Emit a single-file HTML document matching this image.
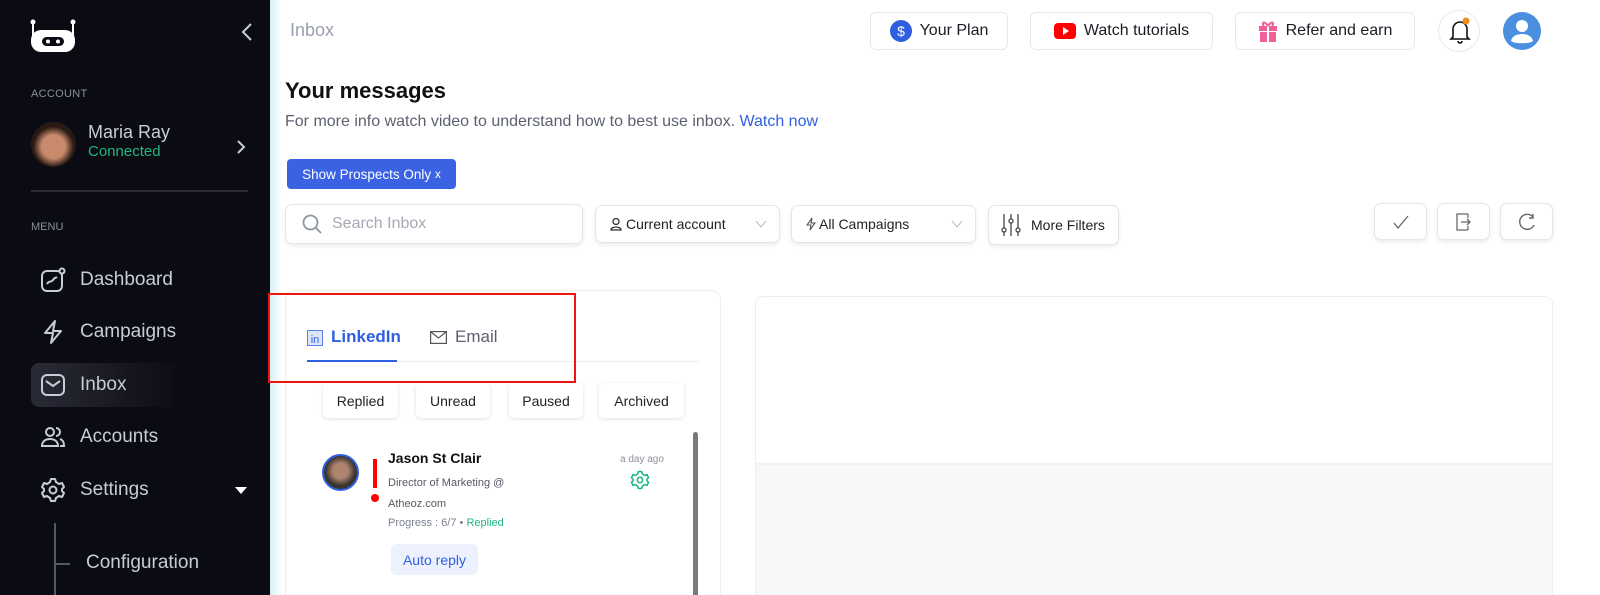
<!DOCTYPE html>
<html style="overflow:hidden;width:1600px;height:595px"><head><meta charset="utf-8"><style>
*{box-sizing:border-box;margin:0;padding:0}
body{width:1600px;height:595px;overflow:hidden;background:#fff;font-family:"Liberation Sans",sans-serif;position:relative}
.a{position:absolute}
.sb{left:0;top:0;width:270px;height:595px;background:#0b0b14}
.strip{left:270px;top:0;width:12px;height:595px;background:linear-gradient(90deg,#d6eef8,#fff)}
.mi{position:absolute;left:40px;color:#c9ccd4;font-size:19px;display:flex;align-items:center;gap:14px}
.btn{position:absolute;border:1px solid #e6e8ec;border-radius:6px;background:#fff;display:flex;align-items:center;justify-content:center;gap:8px;font-size:16px;color:#1c1c24}
.f{position:absolute;border:1px solid #e3e5ea;border-radius:7px;background:#fff;box-shadow:0 2px 4px rgba(0,0,0,.08);display:flex;align-items:center;font-size:14px;color:#222}
.chip{position:absolute;top:383px;height:35px;border-radius:5px;background:#fff;box-shadow:0 1px 4px rgba(0,0,0,.12);font-size:14px;color:#222;display:flex;align-items:center;justify-content:center}
</style></head><body>
<div class="a sb"></div>
<div class="a strip"></div>
<svg class="a" style="left:28px;top:18px" width="50" height="34" viewBox="0 0 50 34"><circle cx="5" cy="4" r="2.5" fill="#fff"/><circle cx="45" cy="4" r="2.5" fill="#fff"/><rect x="4" y="4" width="2" height="14" fill="#fff"/><rect x="44" y="4" width="2" height="14" fill="#fff"/><rect x="3" y="12" width="44" height="22" rx="10" fill="#fff"/><rect x="14" y="19" width="22" height="9" rx="4.5" fill="#0b0b14"/><circle cx="20" cy="23.5" r="2" fill="#fff"/><circle cx="30" cy="23.5" r="2" fill="#fff"/></svg>
<svg class="a" style="left:240px;top:22px" width="14" height="20"><path d="M11 2L3 10l8 8" stroke="#c9ccd4" stroke-width="2" fill="none"/></svg>
<div class="a" style="left:31px;top:88px;font-size:11px;color:#8b8f9b;letter-spacing:.3px">ACCOUNT</div>
<div class="a" style="left:31px;top:122px;width:45px;height:45px;border-radius:50%;background:radial-gradient(circle at 50% 55%,#c98a6c 0 35%,#2a1a14 60%)"></div>
<div class="a" style="left:88px;top:122px;font-size:18px;color:#c9ccd4">Maria Ray</div>
<div class="a" style="left:88px;top:143px;font-size:15px;color:#1fb77f">Connected</div>
<svg class="a" style="left:236px;top:140px" width="10" height="14"><path d="M2 1l6 6-6 6" stroke="#c9ccd4" stroke-width="2" fill="none"/></svg>
<div class="a" style="left:31px;top:190px;width:217px;height:2px;background:#2a2b36"></div>
<div class="a" style="left:31px;top:221px;font-size:11px;color:#8b8f9b">MENU</div>
<div class="a" style="left:31px;top:363px;width:150px;height:44px;border-radius:8px;background:linear-gradient(90deg,#2a2b36,#0b0b14)"></div>
<div class="mi" style="top:267px"><svg width="26" height="26" viewBox="0 0 26 26" fill="none" stroke="#c9ccd4" stroke-width="2"><rect x="2" y="4" width="20" height="20" rx="5"/><circle cx="22" cy="4" r="2.5" fill="#0b0b14"/><path d="M7 17c2-4 4-1 6-4s3-2 4-3"/></svg>Dashboard</div>
<div class="mi" style="top:319px"><svg width="26" height="26" viewBox="0 0 26 26" fill="none" stroke="#c9ccd4" stroke-width="2"><path d="M15 2L5 14h8l-2 10 10-12h-8z" stroke-linejoin="round"/></svg>Campaigns</div>
<div class="mi" style="top:372px"><svg width="26" height="26" viewBox="0 0 26 26" fill="none" stroke="#c9ccd4" stroke-width="2"><rect x="2" y="3" width="22" height="20" rx="5"/><path d="M6 9l7 5 7-5"/></svg>Inbox</div>
<div class="mi" style="top:424px"><svg width="26" height="26" viewBox="0 0 26 26" fill="none" stroke="#c9ccd4" stroke-width="2"><circle cx="10" cy="8" r="4"/><path d="M2 22c0-5 4-7 8-7s8 2 8 7z"/><path d="M16 4a4 4 0 010 8M20 15c3 1 4 3 4 7h-4"/></svg>Accounts</div>
<div class="mi" style="top:477px"><svg width="26" height="26" viewBox="0 0 26 26" fill="none" stroke="#c9ccd4" stroke-width="2"><circle cx="13" cy="13" r="3.5"/><path d="M11 2h4l1 3 3 2 3-1 2 4-2 2v2l2 2-2 4-3-1-3 2-1 3h-4l-1-3-3-2-3 1-2-4 2-2v-2l-2-2 2-4 3 1 3-2z" stroke-linejoin="round"/></svg>Settings</div>
<svg class="a" style="left:234px;top:486px" width="14" height="9"><path d="M1 1h12l-6 7z" fill="#fff"/></svg>
<div class="a" style="left:54px;top:523px;width:2px;height:72px;background:#555866"></div>
<div class="a" style="left:54px;top:563px;width:16px;height:2px;background:#555866"></div>
<div class="a" style="left:86px;top:552px;font-size:19px;color:#c9ccd4">Configuration</div>

<div class="a" style="left:290px;top:20px;font-size:18px;color:#9aa0ad">Inbox</div>
<div class="btn" style="left:870px;top:12px;width:138px;height:38px"><svg width="22" height="22"><circle cx="11" cy="11" r="11" fill="#2f5fe0"/><text x="11" y="16" font-size="14" fill="#fff" text-anchor="middle" font-family="Liberation Sans">$</text></svg>Your Plan</div>
<div class="btn" style="left:1030px;top:12px;width:183px;height:38px"><svg width="22" height="16"><rect width="22" height="16" rx="4" fill="#f00"/><path d="M9 4l6 4-6 4z" fill="#fff"/></svg>Watch tutorials</div>
<div class="btn" style="left:1235px;top:12px;width:180px;height:38px"><svg width="20" height="22"><rect x="1" y="6" width="18" height="5" fill="#f0609a"/><rect x="2" y="12" width="16" height="10" fill="#f0609a"/><rect x="9" y="6" width="2" height="16" fill="#fff"/><path d="M10 6C6 0 3 3 6 6M10 6c4-6 7-3 4 0" stroke="#f0609a" stroke-width="2" fill="none"/></svg>Refer and earn</div>
<div class="a" style="left:1438px;top:10px;width:42px;height:42px;border-radius:50%;border:1px solid #e6e8ec;background:#fff"></div>
<svg class="a" style="left:1449px;top:17px" width="22" height="28" viewBox="0 0 22 28" fill="none" stroke="#111" stroke-width="1.6"><path d="M4 20V12a7 7 0 0114 0v8l2 2H2z"/><path d="M9 24a2 2 0 004 0"/><circle cx="17" cy="4" r="3.5" fill="#f28c1c" stroke="none"/></svg>
<svg class="a" style="left:1503px;top:12px" width="38" height="38"><circle cx="19" cy="19" r="19" fill="#4a8fe0"/><circle cx="19" cy="14" r="6" fill="#fff"/><path d="M8 29c1-5 6-7 11-7s10 2 11 7c-3 3-19 3-22 0z" fill="#fff"/></svg>

<div class="a" style="left:285px;top:78px;font-size:22px;font-weight:bold;color:#111">Your messages</div>
<div class="a" style="left:285px;top:113px;font-size:16px;color:#5c6170">For more info watch video to understand how to best use inbox. <span style="color:#2f5fe0">Watch now</span></div>
<div class="a" style="left:287px;top:159px;width:169px;height:30px;border-radius:4px;background:#3a62e3;color:#fff;font-size:13.5px;display:flex;align-items:center;justify-content:center">Show Prospects Only&nbsp;<span style="font-size:12px">x</span></div>

<div class="f" style="left:285px;top:204px;width:298px;height:40px;padding-left:16px;color:#a5a9b4;font-size:16px"><svg width="20" height="20" fill="none" stroke="#8c93a3" stroke-width="1.8" style="margin-right:10px"><circle cx="8.5" cy="8.5" r="7"/><path d="M14 14l5 5"/></svg>Search Inbox</div>
<div class="f" style="left:595px;top:205px;width:185px;height:38px;padding-left:14px"><svg width="12" height="14" fill="none" stroke="#333" stroke-width="1.3" style="margin-right:4px"><circle cx="6" cy="4.5" r="3"/><path d="M1 13c0-4 10-4 10 0z"/></svg>Current account<svg width="12" height="8" style="position:absolute;right:12px" fill="none" stroke="#bbb"><path d="M1 1l5 6 5-6"/></svg></div>
<div class="f" style="left:791px;top:205px;width:185px;height:38px;padding-left:14px"><svg width="10" height="14" fill="none" stroke="#555" stroke-width="1.1" style="margin-right:3px"><path d="M6 1L1 8h4l-1 5 5-7H5z"/></svg>All Campaigns<svg width="12" height="8" style="position:absolute;right:12px" fill="none" stroke="#bbb"><path d="M1 1l5 6 5-6"/></svg></div>
<div class="f" style="left:988px;top:205px;width:131px;height:40px;padding-left:12px;gap:10px"><svg width="20" height="24" fill="none" stroke="#444" stroke-width="1.3"><path d="M3 1v22M10 1v22M17 1v22"/><circle cx="3" cy="17" r="2" fill="#fff"/><circle cx="10" cy="8" r="2" fill="#fff"/><circle cx="17" cy="17" r="2" fill="#fff"/></svg>More Filters</div>
<div class="f" style="left:1374px;top:203px;width:53px;height:37px;justify-content:center"><svg width="16" height="14" fill="none" stroke="#666" stroke-width="1.3"><path d="M1 8l4 5 10-12"/></svg></div>
<div class="f" style="left:1437px;top:203px;width:53px;height:37px;justify-content:center"><svg width="16" height="18" fill="none" stroke="#666" stroke-width="1.3"><path d="M12 1H1v16h11M12 13v4M12 1v4M5 9h9M11 6l3 3-3 3"/></svg></div>
<div class="f" style="left:1500px;top:203px;width:53px;height:37px;justify-content:center"><svg width="18" height="18" fill="none" stroke="#666" stroke-width="1.4"><path d="M15 4A7.5 7.5 0 1016 12M15 1v4h-4"/></svg></div>

<div class="a" style="left:285px;top:290px;width:436px;height:305px;border:1px solid #eceef1;border-bottom:none;border-radius:10px 10px 0 0"></div>
<div class="a" style="left:307px;top:361px;width:392px;height:1px;background:#eceef1"></div>
<div class="a" style="left:307px;top:360px;width:90px;height:2px;background:#2f5fe0"></div>
<svg class="a" style="left:307px;top:330px" width="16" height="16"><rect x=".5" y=".5" width="15" height="15" fill="#dde6fb" stroke="#5a7fe8"/><text x="8" y="13" font-size="11" text-anchor="middle" fill="#2f5fe0" font-family="Liberation Sans">in</text></svg>
<div class="a" style="left:331px;top:327px;font-size:17px;font-weight:bold;color:#2f5fe0">LinkedIn</div>
<svg class="a" style="left:430px;top:331px" width="17" height="13" fill="none" stroke="#555" stroke-width="1.2"><rect x=".6" y=".6" width="15.8" height="11.8"/><path d="M1 1l7.5 6L16 1"/></svg>
<div class="a" style="left:455px;top:327px;font-size:17px;color:#5c6170">Email</div>
<div class="a" style="left:268px;top:293px;width:308px;height:90px;border:2px solid #f0150f"></div>
<div class="chip" style="left:323px;width:75px">Replied</div>
<div class="chip" style="left:416px;width:74px">Unread</div>
<div class="chip" style="left:509px;width:74px">Paused</div>
<div class="chip" style="left:599px;width:85px">Archived</div>
<div class="a" style="left:693px;top:432px;width:5px;height:163px;background:#7a7a7a;border-radius:3px 3px 0 0"></div>
<div class="a" style="left:322px;top:454px;width:37px;height:37px;border-radius:50%;border:2px solid #2f5fe0;background:radial-gradient(circle at 50% 45%,#b08570 0 30%,#3b3530 60%)"></div>
<div class="a" style="left:373px;top:459px;width:4px;height:29px;background:#f00"></div>
<div class="a" style="left:371px;top:494px;width:8px;height:8px;border-radius:50%;background:#f00"></div>
<div class="a" style="left:388px;top:450px;font-size:14px;font-weight:bold;color:#111">Jason St Clair</div>
<div class="a" style="left:388px;top:473px;font-size:11px;color:#555a66;line-height:21px">Director of Marketing @<br>Atheoz.com</div>
<div class="a" style="left:388px;top:517px;font-size:11px;color:#7a8090">Progress : 6/7 • <span style="color:#1fb77f">Replied</span></div>
<div class="a" style="left:620px;top:454px;font-size:10px;color:#8a8f9a">a day ago</div>
<svg class="a" style="left:630px;top:470px" width="20" height="20" viewBox="0 0 26 26" fill="none" stroke="#1fb77f" stroke-width="2"><circle cx="13" cy="13" r="3.5"/><path d="M11 2h4l1 3 3 2 3-1 2 4-2 2v2l2 2-2 4-3-1-3 2-1 3h-4l-1-3-3-2-3 1-2-4 2-2v-2l-2-2 2-4 3 1 3-2z"/></svg>
<div class="a" style="left:391px;top:544px;width:87px;height:31px;border-radius:5px;background:#edf0fd;color:#2f5fe0;font-size:14px;display:flex;align-items:center;justify-content:center">Auto reply</div>

<div class="a" style="left:755px;top:296px;width:798px;height:299px;border:1px solid #eceef1;border-bottom:none;border-radius:8px 8px 0 0;overflow:hidden"><div style="position:absolute;top:166px;left:0;right:0;bottom:0;background:#f7f8fa;border-top:2px solid #f0f1f3"></div></div>
</body></html>
